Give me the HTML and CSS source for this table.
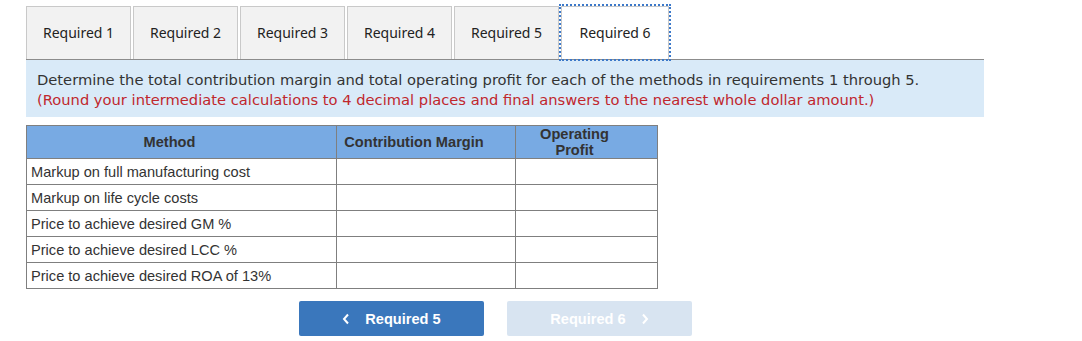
FILE: index.html
```html
<!DOCTYPE html>
<html lang="en">
<head>
  <meta charset="UTF-8" />
  <title>Required 6</title>
  <link rel="stylesheet" href="styles.css">
</head>
<body>
  <div class="page">
    <div class="tabs">
      <div class="tab">Required 1</div>
      <div class="tab">Required 2</div>
      <div class="tab">Required 3</div>
      <div class="tab">Required 4</div>
      <div class="tab">Required 5</div>
      <div class="tab active">Required 6</div>
    </div>

    <div class="prompt">
      <p>Determine the total contribution margin and total operating profit for each of the methods in requirements 1 through 5.</p>
      <p class="note">(Round your intermediate calculations to 4 decimal places and final answers to the nearest whole dollar amount.)</p>
    </div>

    <table class="answers">
      <thead>
        <tr>
          <th class="col-method">Method</th>
          <th class="col-cm">Contribution Margin</th>
          <th class="col-op">Operating<br>Profit</th>
        </tr>
      </thead>
      <tbody>
        <tr><td>Markup on full manufacturing cost</td><td></td><td></td></tr>
        <tr><td>Markup on life cycle costs</td><td></td><td></td></tr>
        <tr><td>Price to achieve desired GM %</td><td></td><td></td></tr>
        <tr><td>Price to achieve desired LCC %</td><td></td><td></td></tr>
        <tr><td>Price to achieve desired ROA of 13%</td><td></td><td></td></tr>
      </tbody>
    </table>

    <div class="nav">
      <button class="btn prev">
        <svg width="8" height="12" viewBox="0 0 8 12"><path d="M6 1.5 L2 6 L6 10.5" fill="none" stroke="#fff" stroke-width="2"/></svg>
        <span>Required 5</span>
      </button>
      <button class="btn next" disabled>
        <span>Required 6</span>
        <svg width="8" height="12" viewBox="0 0 8 12"><path d="M2 1.5 L6 6 L2 10.5" fill="none" stroke="#fff" stroke-width="2"/></svg>
      </button>
    </div>
  </div>
</body>
</html>
```

FILE: styles.css
```css
body {
  margin: 0;
  background: #fff;
  font-family: "Liberation Sans", Arial, sans-serif;
}

.page {
  width: 958px;
  padding: 6px 0 0 26px;
}

.tabs {
  display: flex;
  gap: 2px;
  border-bottom: 1px solid #8c8c8c;
  height: 53px;
}

.tab {
  width: 103px;
  height: 51px;
  padding-bottom: 1px;
  border: 1px solid #c9c9c9;
  border-bottom: none;
  background: #f2f2f2;
  display: flex;
  align-items: center;
  justify-content: center;
  font-family: "Noto Sans", sans-serif;
  font-size: 14px;
  color: #222;
}

.tab.active {
  width: 106px;
  background: #fff;
  outline: 2px dotted #3b78c9;
  outline-offset: 0;
}

.prompt {
  background: #d9eaf8;
  padding: 10px 11px 8px;
  height: 39px;
}

.prompt p {
  margin: 0;
  font-family: "DejaVu Sans", Verdana, sans-serif;
  font-size: 14.7px;
  line-height: 20px;
  color: #333;
}

.prompt .note {
  color: #c0272d;
}

.answers {
  margin-top: 8px;
  border-collapse: collapse;
  font-size: 14.6px;
  color: #333;
}

.answers th,
.answers td {
  border: 1px solid #7f7f7f;
  padding: 0 4px;
}

.answers th {
  background: #78aae3;
  height: 32px;
  padding: 0 24px 0 0;
  font-weight: bold;
  line-height: 16px;
  text-align: center;
}

.answers td {
  height: 25px;
  text-align: left;
}

.col-method { width: 285px; }
.col-cm { width: 154px; }
.col-op { width: 117px; }

.nav {
  display: flex;
  gap: 23px;
  margin-top: 12px;
  padding-left: 273px;
}

.btn {
  width: 185px;
  height: 35px;
  border: none;
  border-radius: 2px;
  display: flex;
  align-items: center;
  justify-content: center;
  gap: 15px;
  font-family: "Liberation Sans", Arial, sans-serif;
  font-weight: bold;
  font-size: 14.6px;
  color: #fff;
}

.btn.prev {
  background: #3a77bc;
}

.btn.next {
  background: #d8e4f1;
}
```
